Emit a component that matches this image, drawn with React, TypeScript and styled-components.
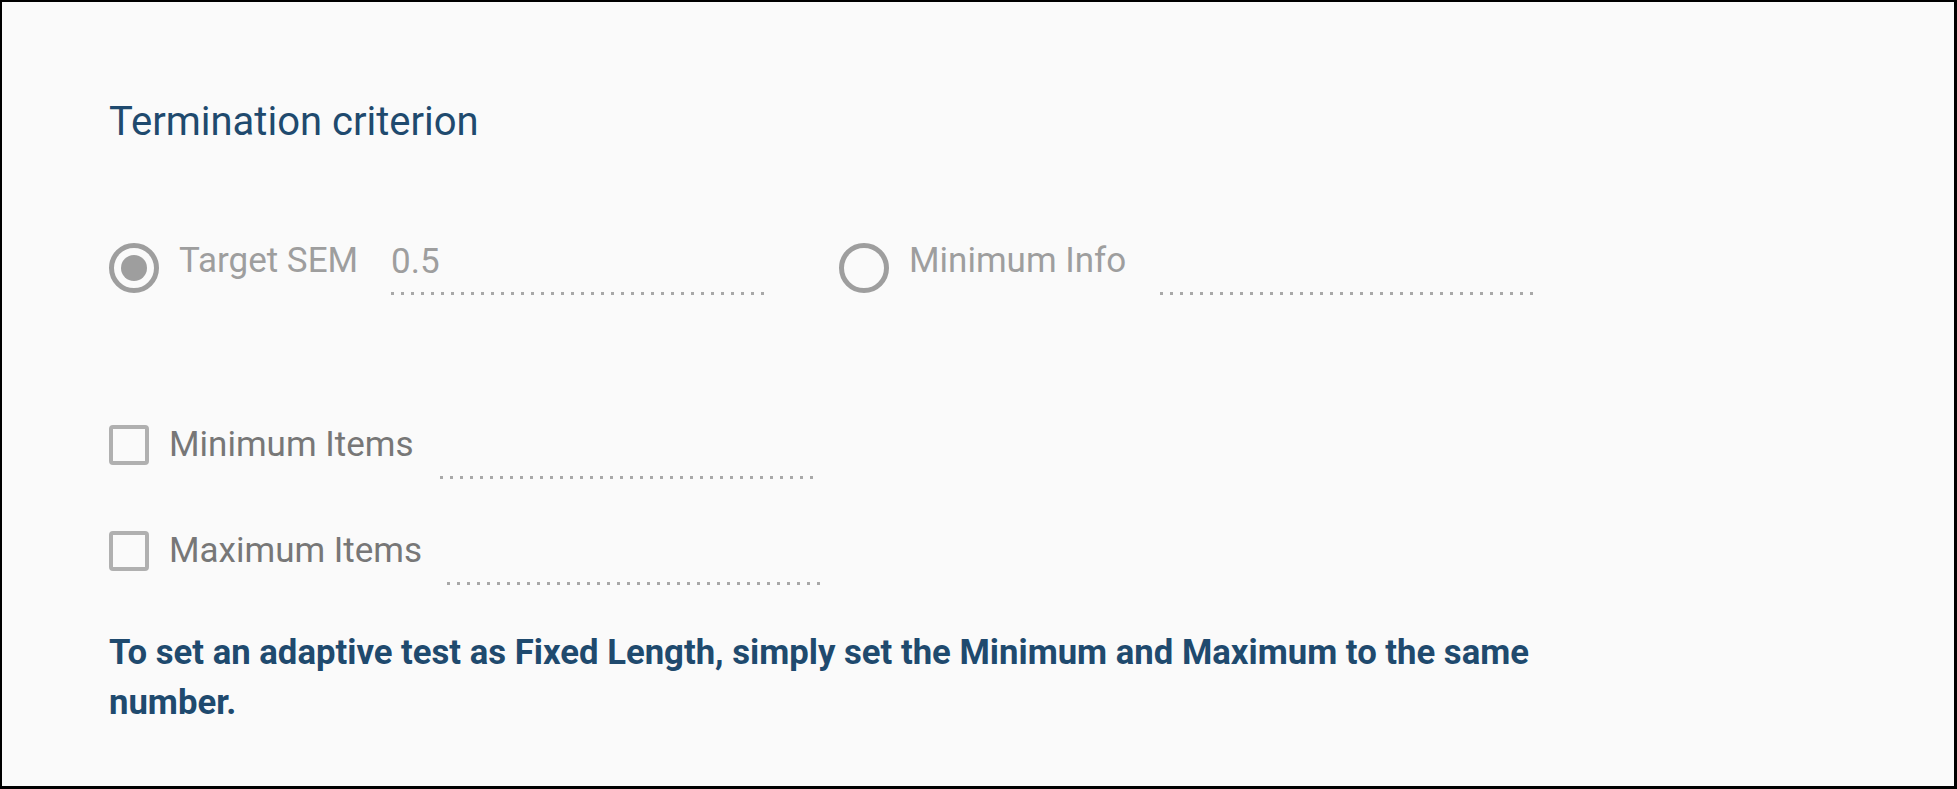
import React from "react";
import styled, { createGlobalStyle } from "styled-components";

const Global = createGlobalStyle`
  html, body { margin: 0; padding: 0; background: #fafafa; }
  * { box-sizing: border-box; }
`;

const Frame = styled.div`
  width: 100vw;
  height: 789px;
  border: 2px solid #000;
  border-right-width: 3px;
  border-bottom-width: 3px;
  background: #fafafa;
  padding: 96px 0 0 107px;
  font-family: Roboto, "Liberation Sans", sans-serif;
`;

const Title = styled.h2`
  margin: 0;
  font-size: 40px;
  line-height: 48px;
  font-weight: 400;
  color: #1f4a6e;
`;

const RadioRow = styled.div`
  margin-top: 94px;
  display: grid;
  grid-template-columns: 730px auto;
`;

const Group = styled.label<{ $top?: number }>`
  display: flex;
  align-items: flex-start;
  margin-top: ${(p) => p.$top ?? 0}px;
`;

const Radio = styled.span`
  width: 50px;
  height: 50px;
  margin-top: 3px;
  border-radius: 50%;
  border: 5px solid #9e9e9e;
  display: grid;
  place-items: center;
  flex: none;
`;

const Dot = styled.span`
  width: 26px;
  height: 26px;
  border-radius: 50%;
  background: #9e9e9e;
`;

const Box = styled.span`
  width: 40px;
  height: 40px;
  margin-top: 1px;
  border: 4px solid #b0b0b0;
  border-radius: 4px;
  flex: none;
`;

const Label = styled.span<{ $dark?: boolean }>`
  margin-left: 20px;
  font-size: 35px;
  line-height: 42px;
  color: ${(p) => (p.$dark ? "#777777" : "#9e9e9e")};
  white-space: nowrap;
`;

const Field = styled.input<{ $gap: number; $w: number }>`
  margin-left: ${(p) => p.$gap}px;
  width: ${(p) => p.$w}px;
  height: 55px;
  padding: 0 3px 13px 1px;
  border: none;
  outline: none;
  font-family: Roboto, "Liberation Sans", sans-serif;
  font-size: 35px;
  line-height: 42px;
  color: #9e9e9e;
  background-color: transparent;
  background-image: linear-gradient(to right, #a8a8a8 3px, transparent 3px);
  background-size: 10px 3px;
  background-repeat: repeat-x;
  background-position: 1px bottom;
`;

const Note = styled.p`
  margin: 42px 0 0 0;
  max-width: 1440px;
  font-size: 34.7px;
  line-height: 50px;
  font-weight: 700;
  color: #1f4a6e;
`;

export default function App() {
  return (
    <>
      <Global />
      <Frame>
        <Title>Termination criterion</Title>
        <RadioRow>
          <Group>
            <Radio>
              <Dot />
            </Radio>
            <Label>Target SEM</Label>
            <Field $gap={32} $w={375} defaultValue="0.5" readOnly />
          </Group>
          <Group>
            <Radio />
            <Label>Minimum Info</Label>
            <Field $gap={33} $w={375} defaultValue="" readOnly />
          </Group>
        </RadioRow>
        <Group $top={129}>
          <Box />
          <Label $dark>Minimum Items</Label>
          <Field $gap={25} $w={374} defaultValue="" readOnly />
        </Group>
        <Group $top={51}>
          <Box />
          <Label $dark>Maximum Items</Label>
          <Field $gap={24} $w={375} defaultValue="" readOnly />
        </Group>
        <Note>
          To set an adaptive test as Fixed Length, simply set the Minimum and
          Maximum to the same number.
        </Note>
      </Frame>
    </>
  );
}
